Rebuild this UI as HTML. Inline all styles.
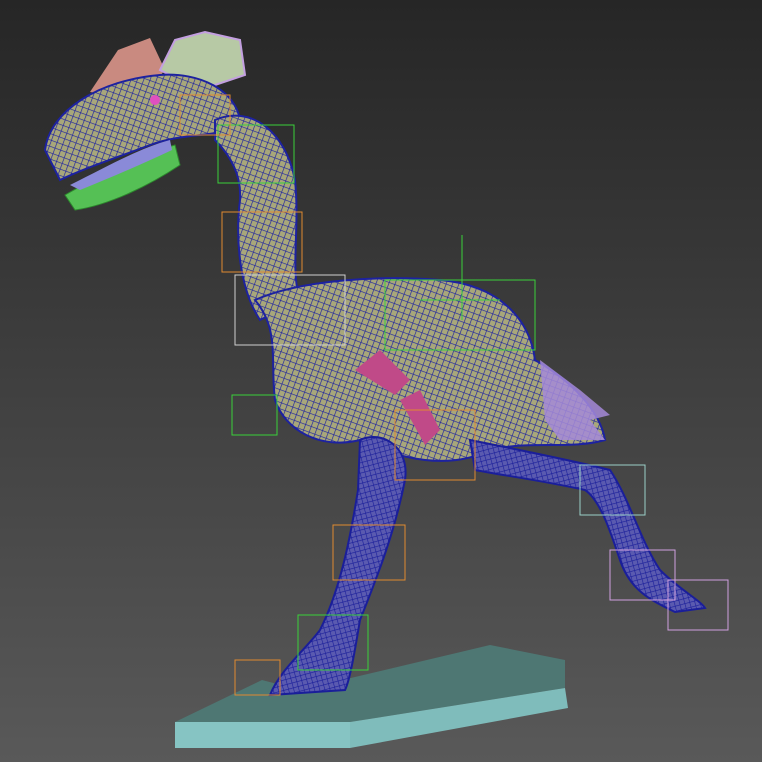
<!DOCTYPE html>
<html><head><style>html,body{margin:0;padding:0;width:762px;height:762px;overflow:hidden;background:#3a3a3a}</style></head>
<body>
<svg width="762" height="762" viewBox="0 0 762 762" xmlns="http://www.w3.org/2000/svg">
<defs>
<linearGradient id="bg" x1="0" y1="0" x2="0" y2="1">
<stop offset="0" stop-color="#262626"/><stop offset="1" stop-color="#595959"/></linearGradient>
<pattern id="mesh" width="6" height="6" patternUnits="userSpaceOnUse" patternTransform="rotate(20)">
<rect width="6" height="6" fill="#a8a77a"/>
<path d="M0 0H6M0 0V6" stroke="#1d22a0" stroke-width="1.3"/></pattern>
<pattern id="mesh2" width="5" height="5" patternUnits="userSpaceOnUse" patternTransform="rotate(-15)">
<rect width="5" height="5" fill="#5a5ab0"/>
<path d="M0 0H5M0 0V5" stroke="#1a1e9a" stroke-width="1.2"/></pattern>
</defs>
<rect width="762" height="762" fill="url(#bg)"/>
<polygon points="175,722 262,680 300,690 490,645 565,660 565,688 350,722" fill="#4e7773"/>
<polygon points="175,722 350,722 350,748 175,748" fill="#86c4c3"/>
<polygon points="350,722 565,688 568,708 350,748" fill="#7fbcbb"/>
<polygon points="90,92 118,50 150,38 165,70 140,100" fill="#c98a80"/>
<polygon points="160,70 175,40 205,32 240,40 245,75 200,90" fill="#b7c9a5" stroke="#c39fe0" stroke-width="2"/>
<path d="M45,150 C50,110 100,80 160,75 C200,72 235,90 240,120 C230,140 190,130 150,145 C110,160 80,170 60,180 Z" fill="url(#mesh)" stroke="#1d22a0" stroke-width="2"/>
<path d="M65,195 C100,175 140,155 175,145 L180,165 C150,185 110,205 75,210 Z" fill="#55c055" stroke="#2d8a2d"/>
<path d="M70,185 C110,165 140,148 170,140 L172,150 C140,165 110,178 80,190 Z" fill="#8a8ad8"/>
<circle cx="155" cy="100" r="5" fill="#e050c0"/>
<path d="M215,120 C250,105 285,130 295,180 C300,230 290,270 300,300 L260,320 C240,290 235,240 240,200 C242,170 225,150 215,140 Z" fill="url(#mesh)" stroke="#1d22a0" stroke-width="2"/>
<path d="M255,300 C300,280 380,275 440,280 C500,285 530,320 535,360 C570,380 600,410 605,440 C570,450 530,440 490,450 C450,470 400,460 360,440 C320,450 285,430 275,400 C270,360 280,330 255,300 Z" fill="url(#mesh)" stroke="#1d22a0" stroke-width="2"/>
<polygon points="540,360 580,390 610,415 590,420 605,440 560,440 545,420" fill="#a58ad8" opacity="0.85"/>
<polygon points="355,370 380,350 410,380 395,395" fill="#c04a88"/>
<polygon points="400,400 420,390 440,430 425,445" fill="#c04a88"/>
<path d="M360,440 C380,430 410,445 405,480 C395,530 380,570 360,620 C355,650 350,680 345,690 L270,695 C280,670 305,650 320,630 C340,590 350,540 358,490 Z" fill="url(#mesh2)" stroke="#1a1e9a" stroke-width="2"/>
<path d="M470,440 C520,450 570,460 610,470 C630,500 640,540 660,570 C680,590 700,600 705,608 L675,612 C650,600 630,590 620,560 C610,530 600,500 585,490 C540,480 500,475 475,470 Z" fill="url(#mesh2)" stroke="#1a1e9a" stroke-width="2"/>
<g fill="none" stroke-width="1">
<rect x="222" y="212" width="80" height="60" stroke="#e08a30"/>
<rect x="218" y="125" width="76" height="58" stroke="#3ad03a"/>
<rect x="180" y="95" width="50" height="40" stroke="#e08a30"/>
<rect x="235" y="275" width="110" height="70" stroke="#d0d0d0"/>
<rect x="385" y="280" width="150" height="70" stroke="#3ad03a"/>
<rect x="232" y="395" width="45" height="40" stroke="#3ad03a"/>
<rect x="395" y="410" width="80" height="70" stroke="#e08a30"/>
<rect x="333" y="525" width="72" height="55" stroke="#e08a30"/>
<rect x="298" y="615" width="70" height="55" stroke="#3ad03a"/>
<rect x="235" y="660" width="45" height="35" stroke="#e08a30"/>
<rect x="580" y="465" width="65" height="50" stroke="#9ad0c8"/>
<rect x="610" y="550" width="65" height="50" stroke="#d0a0e0"/>
<rect x="668" y="580" width="60" height="50" stroke="#d0a0e0"/>
<path d="M462,235V320M420,300H500" stroke="#3ad03a"/>
</g>
</svg>
</body></html>
